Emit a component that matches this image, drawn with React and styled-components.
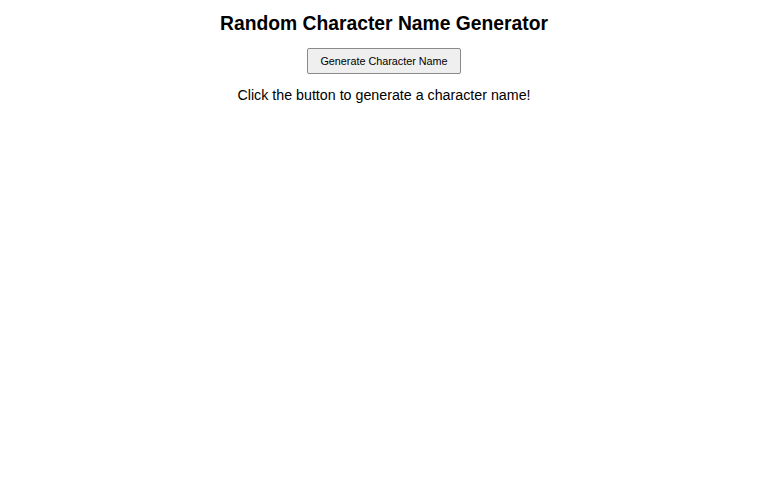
import React, { useState } from "react";
import styled, { createGlobalStyle } from "styled-components";

const GlobalStyle = createGlobalStyle`
  html, body {
    margin: 0;
    padding: 0;
    background: #ffffff;
  }
  body {
    font-family: "Liberation Sans", Arial, sans-serif;
    color: #000000;
  }
`;

const Page = styled.main`
  display: flex;
  flex-direction: column;
  align-items: center;
  padding-top: 12px;
  text-align: center;
`;

const Title = styled.h1`
  margin: 0 0 13px;
  font-size: 19.3px;
  line-height: 23px;
  font-weight: bold;
`;

const GenerateButton = styled.button`
  height: 26px;
  padding: 0 12px;
  font-family: "Liberation Sans", Arial, sans-serif;
  font-size: 10.8px;
  color: #000000;
  background: #efefef;
  border: 1px solid #8a8a8a;
  border-radius: 2px;
  cursor: pointer;
`;

const Result = styled.p`
  margin: 12px 0 0;
  font-size: 14.25px;
  line-height: 18px;
`;

const FIRST = ["Aria", "Kael", "Lyra", "Thorn", "Mira", "Dorian", "Selene", "Bram"];
const LAST = ["Stormwind", "Ashford", "Nightshade", "Ironwood", "Blackthorn", "Vale"];

export default function App() {
  const [name, setName] = useState("");
  const generate = () => {
    const f = FIRST[Math.floor(Math.random() * FIRST.length)];
    const l = LAST[Math.floor(Math.random() * LAST.length)];
    setName(`${f} ${l}`);
  };
  return (
    <>
      <GlobalStyle />
      <Page>
        <Title>Random Character Name Generator</Title>
        <GenerateButton onClick={generate}>Generate Character Name</GenerateButton>
        <Result>{name || "Click the button to generate a character name!"}</Result>
      </Page>
    </>
  );
}
